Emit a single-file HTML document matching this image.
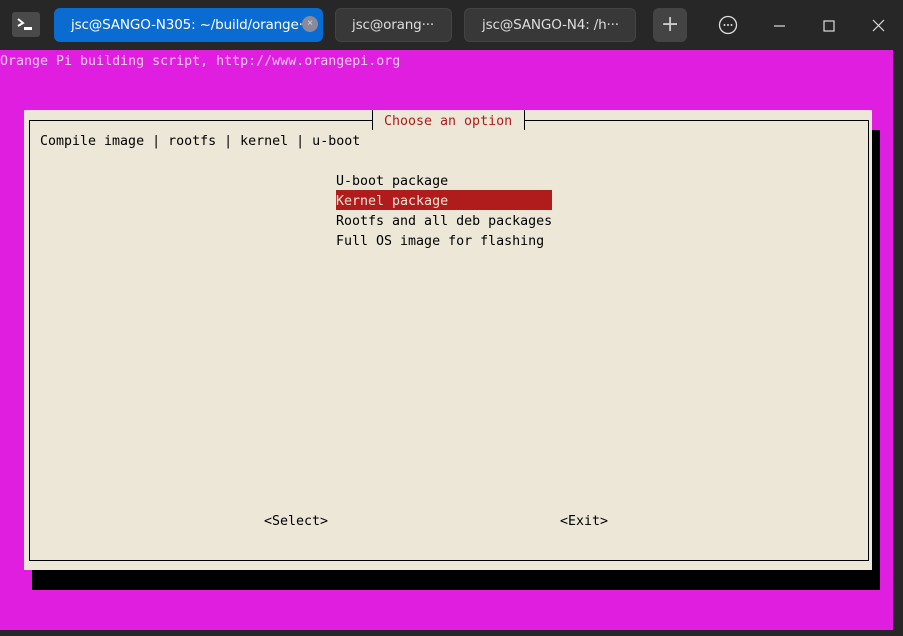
<!DOCTYPE html>
<html><head><style>
*{margin:0;padding:0;box-sizing:border-box}
body{width:903px;height:636px;background:#272727;position:relative;overflow:hidden;font-family:"DejaVu Sans Mono","Liberation Mono",monospace;font-size:13.3px}
.t{position:absolute;white-space:pre;line-height:20px;height:20px;margin-top:2px}
.tab{position:absolute;top:8px;height:34px;border-radius:6px;background:#383838;border:1px solid #444;color:#ddd;font-family:"DejaVu Sans","Liberation Sans",sans-serif;font-size:13.6px;line-height:32px;white-space:nowrap;overflow:hidden;letter-spacing:-0.2px}
</style></head><body>
<div style="position:absolute;left:12px;top:12px;width:28px;height:25px;background:#4a4a4a;border-radius:3px"></div>
<svg style="position:absolute;left:12px;top:12px" width="28" height="25"><path d="M6 7 L11 11 L6 14" stroke="#fff" stroke-width="2" fill="none"/><rect x="12" y="15" width="8" height="3" fill="#fff"/></svg>
<div class="tab" style="left:54px;width:269px;background:#0a6bd0;border-color:#0a6bd0;color:#fff;padding-left:16px">jsc@SANGO-N305: ~/build/orange··</div>
<div style="position:absolute;left:302px;top:16px;width:16px;height:16px;border-radius:8px;background:#8a8a9a;color:#ddd;font:10px sans-serif;text-align:center;line-height:16px">×</div>
<div class="tab" style="left:335px;width:117px;padding-left:16px">jsc@orang···</div>
<div class="tab" style="left:464px;width:172px;padding-left:17px">jsc@SANGO-N4: /h···</div>
<div class="tab" style="left:653px;width:34px;text-align:center;font-size:22px;color:#ccc;background:#444">+</div>
<svg style="position:absolute;left:700px;top:10px" width="203" height="32">
<circle cx="28" cy="15" r="8.5" stroke="#ddd" stroke-width="1.3" fill="none"/><circle cx="24.5" cy="15" r="1" fill="#ddd"/><circle cx="28" cy="15" r="1" fill="#ddd"/><circle cx="31.5" cy="15" r="1" fill="#ddd"/>
<path d="M74 16 H85" stroke="#ddd" stroke-width="1.2"/>
<rect x="124" y="11" width="10" height="10" stroke="#ddd" stroke-width="1.2" fill="none"/>
<path d="M173 10 L184 21 M184 10 L173 21" stroke="#ddd" stroke-width="1.2"/>
</svg>
<div style="position:absolute;left:0;top:50px;width:893px;height:580px;background:#e01ee0"></div>
<div class="t" style="left:0;top:50px;color:#f0c8f0">Orange Pi building script, http://www.orangepi.org</div>
<div style="position:absolute;left:32px;top:130px;width:848px;height:460px;background:#000"></div>
<div style="position:absolute;left:24px;top:110px;width:848px;height:460px;background:#ede7d7"></div>
<div style="position:absolute;left:29px;top:120px;width:840px;height:441px;border:1px solid #000"></div>
<div style="position:absolute;left:372px;top:110px;width:153px;height:20px;background:#ede7d7;border-left:1px solid #000;border-right:1px solid #000"></div>
<div class="t" style="left:384px;top:110px;color:#b01c1c">Choose an option</div>
<div class="t" style="left:40px;top:130px;color:#000">Compile image | rootfs | kernel | u-boot</div>
<div class="t" style="left:336px;top:170px;color:#000">U-boot package</div>
<div style="position:absolute;left:336px;top:190px;width:216px;height:20px;background:#b01c1c"></div>
<div class="t" style="left:336px;top:190px;color:#f4e4d4">Kernel package</div>
<div class="t" style="left:336px;top:210px;color:#000">Rootfs and all deb packages</div>
<div class="t" style="left:336px;top:230px;color:#000">Full OS image for flashing</div>
<div class="t" style="left:264px;top:510px;color:#000">&lt;Select&gt;</div>
<div class="t" style="left:560px;top:510px;color:#000">&lt;Exit&gt;</div>
</body></html>
